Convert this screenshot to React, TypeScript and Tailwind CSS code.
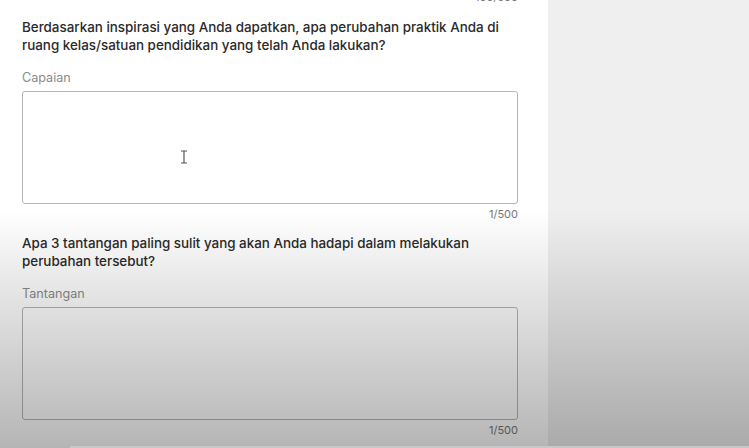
const font = { fontFamily: "Inter, 'Noto Sans', sans-serif" };

const Counter = ({ className = "" }: { className?: string }) => (
  <div className={`text-right text-[11px] leading-[14px] text-[#777] ${className}`}>1/500</div>
);

const Question = ({ title, label, cursor }: { title: string; label: string; cursor?: boolean }) => (
  <section className="flex flex-col">
    <h3 className="text-[13.4px] leading-[18px] font-medium text-[#2a2a2a]">{title}</h3>
    <label className="mt-[15px] text-[12.6px] leading-[18px] text-[#8a8a8a]">{label}</label>
    <div className="relative mt-[4px] h-[113px] rounded-[3px] border border-[#b5b5b5] bg-white">
      {cursor && (
        <svg className="absolute left-[157px] top-[58px]" width="8" height="14" viewBox="0 0 8 14">
          <path d="M1 1h6M4 1v12M1 13h6" stroke="#555" strokeWidth="1.2" fill="none" />
        </svg>
      )}
    </div>
    <Counter className="mt-[3px]" />
  </section>
);

export default function App() {
  return (
    <div className="relative flex h-[448px] w-[749px] overflow-hidden" style={font}>
      <main className="flex w-[548px] flex-col bg-white pl-[22px] pr-[30px]">
        <div className="-mt-[10px] text-right text-[11px] leading-[14px] text-[#777]">100/500</div>
        <div className="mt-[14px]">
          <Question
            title="Berdasarkan inspirasi yang Anda dapatkan, apa perubahan praktik Anda di ruang kelas/satuan pendidikan yang telah Anda lakukan?"
            label="Capaian"
            cursor
          />
        </div>
        <div className="mt-[13px]">
          <Question
            title="Apa 3 tantangan paling sulit yang akan Anda hadapi dalam melakukan perubahan tersebut?"
            label="Tantangan"
          />
        </div>
      </main>
      <aside className="flex-1 bg-[#efefef]" />
      <div className="pointer-events-none absolute inset-0 bg-[linear-gradient(to_bottom,transparent_0%,transparent_47%,rgba(0,0,0,0.1)_65%,rgba(0,0,0,0.29)_100%)]" />
      <div className="pointer-events-none absolute bottom-0 left-[70px] right-0 h-[2px] bg-[#c8c8c8]" />
    </div>
  );
}
